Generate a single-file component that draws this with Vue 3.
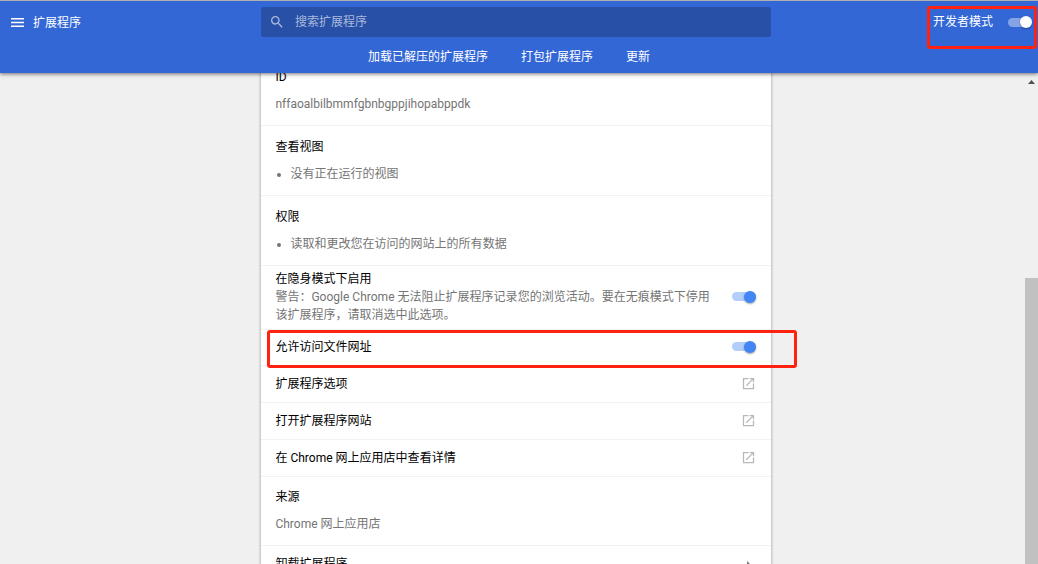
<template>
  <div class="page">
    <header class="toolbar">
      <div class="toolbar-main">
        <div class="brand">
          <svg class="menu-icon" width="13" height="9" viewBox="0 0 13 9">
            <path d="M0 .75h13M0 4.5h13M0 8.25h13" stroke="#fff" stroke-width="1.5" />
          </svg>
          <span>扩展程序</span>
        </div>
        <div class="search">
          <svg class="search-icon" width="16" height="16" viewBox="0 0 24 24">
            <path
              fill="currentColor"
              d="M15.5 14h-.79l-.28-.27A6.47 6.47 0 0 0 16 9.5 6.5 6.5 0 1 0 9.5 16c1.61 0 3.09-.59 4.23-1.57l.27.28v.79l5 4.99L20.49 19l-4.99-5zm-6 0C7.01 14 5 11.99 5 9.5S7.01 5 9.5 5 14 7.01 14 9.5 11.99 14 9.5 14z"
            />
          </svg>
          <span>搜索扩展程序</span>
        </div>
        <div class="dev-mode">
          <span>开发者模式</span>
          <span class="toggle light"></span>
          <div class="mark mark-dev"></div>
        </div>
      </div>
      <nav class="toolbar-actions">
        <span v-for="action in actions" :key="action">{{ action }}</span>
      </nav>
    </header>

    <div class="body">
      <main class="card">
        <section class="block">
          <h3>ID</h3>
          <p>nffaoalbilbmmfgbnbgppjihopabppdk</p>
        </section>
        <section v-for="item in lists" :key="item.title" class="block">
          <h3>{{ item.title }}</h3>
          <ul>
            <li>{{ item.text }}</li>
          </ul>
        </section>

        <div class="row incognito">
          <div class="row-text">
            <h3>在隐身模式下启用</h3>
            <p>警告：Google Chrome 无法阻止扩展程序记录您的浏览活动。要在无痕模式下停用<br />该扩展程序，请取消选中此选项。</p>
          </div>
          <span class="toggle"></span>
        </div>
        <div class="row file-access">
          <h3>允许访问文件网址</h3>
          <span class="toggle"></span>
          <div class="mark mark-file"></div>
        </div>

        <div v-for="link in links" :key="link" class="row">
          <h3>{{ link }}</h3>
          <svg class="open-icon" width="15" height="15" viewBox="0 0 24 24">
            <path
              fill="currentColor"
              d="M19 19H5V5h7V3H3v18h18v-9h-2v7zM14 3v2h3.59l-9.83 9.83 1.41 1.41L19 6.41V10h2V3h-7z"
            />
          </svg>
        </div>

        <section class="block source">
          <h3>来源</h3>
          <p>Chrome 网上应用店</p>
        </section>
        <div class="row">
          <h3>卸载扩展程序</h3>
          <svg class="arrow-icon" width="4" height="6" viewBox="0 0 4 6">
            <path d="M0 0l3 3-3 3z" fill="#757575" />
          </svg>
        </div>
      </main>

      <div class="scrollbar">
        <svg width="7" height="4" viewBox="0 0 7 4">
          <path d="M0 4L3.5 0 7 4z" fill="#505050" />
        </svg>
        <div class="thumb"></div>
      </div>
    </div>
  </div>
</template>

<script setup>
const actions = ['加载已解压的扩展程序', '打包扩展程序', '更新']

const lists = [
  { title: '查看视图', text: '没有正在运行的视图' },
  { title: '权限', text: '读取和更改您在访问的网站上的所有数据' }
]

const links = ['扩展程序选项', '打开扩展程序网站', '在 Chrome 网上应用店中查看详情']
</script>

<style>
body {
  margin: 0;
}
</style>

<style scoped>
.page {
  display: flex;
  flex-direction: column;
  height: 564px;
  overflow: hidden;
  background: #f0f0f0;
  color: #000;
  font-family: Roboto, 'Noto Sans CJK SC', sans-serif;
  font-size: 12px;
  line-height: 18px;
}

.page * {
  box-sizing: border-box;
}

h3,
p,
ul {
  margin: 0;
  padding: 0;
  font-size: 12.03px;
  font-weight: 400;
}

.toolbar {
  position: relative;
  z-index: 1;
  flex: none;
  height: 73px;
  border-top: 1px solid #b0b0b0;
  background: #3367d6;
  box-shadow: 0 1px 4px rgba(0, 0, 0, 0.55);
  color: #fff;
}

.toolbar-main {
  display: grid;
  grid-template-columns: 261px 510px 1fr;
  align-items: center;
  padding-top: 6px;
}

.brand {
  display: flex;
  align-items: center;
  gap: 9px;
  padding-left: 11px;
}

.brand span {
  padding-top: 2px;
}

.search {
  display: flex;
  align-items: center;
  gap: 10px;
  height: 30px;
  padding-left: 8px;
  border-radius: 2px;
  background: #2850a7;
  color: #a9b9dc;
}

.dev-mode {
  position: relative;
  display: flex;
  align-items: center;
  justify-content: flex-end;
  gap: 15px;
  padding-right: 6px;
}

.toolbar-actions {
  display: flex;
  gap: 33px;
  padding: 11px 0 0 368px;
}

.toggle {
  display: flex;
  flex: none;
  align-items: center;
  justify-content: flex-end;
  width: 24px;
  height: 9px;
  border-radius: 5px;
  background: #b3cefb;
}

.toggle::after {
  width: 12px;
  height: 12px;
  flex: none;
  border-radius: 50%;
  background: #4285f4;
  box-shadow: 0 1px 2px rgba(0, 0, 0, 0.35);
  content: '';
}

.toggle.light {
  background: #85a4e6;
}

.toggle.light::after {
  background: #fff;
}

.body {
  display: flex;
  flex: 1;
  min-height: 0;
  justify-content: space-between;
  padding-left: 261px;
}

.card {
  width: 510px;
  height: 540px;
  margin-top: -17px;
  background: #fff;
  box-shadow: 0 1px 3px rgba(0, 0, 0, 0.4);
}

.block {
  height: 70px;
  padding: 12px 15px 0 14.4px;
  border-bottom: 1px solid #f2f2f2;
}

.block p,
.block ul {
  margin-top: 9px;
  color: #757575;
}

.block li {
  display: flex;
  align-items: center;
  gap: 9px;
  padding-left: 2px;
}

.block li::before {
  width: 4px;
  height: 4px;
  margin-top: 2px;
  border-radius: 50%;
  background: #757575;
  content: '';
}

.block.source {
  height: 69px;
  padding-top: 11px;
}

.row {
  display: flex;
  align-items: center;
  justify-content: space-between;
  height: 37px;
  padding: 0 15.5px 0 14.4px;
  border-bottom: 1px solid #f2f2f2;
}

.row p {
  color: #757575;
  white-space: nowrap;
}

.row.incognito {
  height: 64px;
  padding-bottom: 2px;
}

.row.file-access {
  position: relative;
  height: 36px;
  padding-bottom: 2px;
}

.open-icon {
  margin-bottom: 1px;
  color: #b8b8b8;
}

.arrow-icon {
  margin-right: 5px;
}

.mark {
  position: absolute;
  border: 3px solid #ff2211;
  border-radius: 3px;
}

.mark-dev {
  top: -7px;
  right: 1px;
  width: 110px;
  height: 43px;
}

.mark-file {
  top: 0;
  left: 6px;
  width: 530px;
  height: 38px;
}

.scrollbar {
  display: flex;
  flex-direction: column;
  align-items: center;
  width: 13px;
  padding-top: 7px;
}

.thumb {
  width: 13px;
  flex: 1;
  margin-top: 194px;
  background: #c1c1c1;
}
</style>
